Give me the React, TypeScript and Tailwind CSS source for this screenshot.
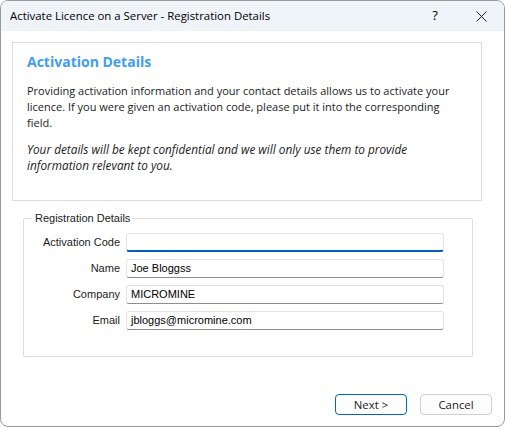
import React from "react";

const ui = { fontFamily: '"Open Sans", "Noto Sans", sans-serif' };
const form = { fontFamily: '"Liberation Sans", Arial, sans-serif' };

interface FieldProps {
  label: string;
  value: string;
  focused?: boolean;
}

function Field({ label, value, focused }: FieldProps) {
  return (
    <div className="flex items-center h-[19px]">
      <label className="w-[102px] pr-[6px] text-right text-[11px] text-[#1b1b1b]">{label}</label>
      <div
        className={`w-[318px] h-[19px] rounded-[3px] border border-[#e3e3e3] bg-white flex items-center px-[4px] text-[11px] text-black ${
          focused ? "border-b-2 border-b-[#005fb8]" : "border-b-[#8d8d8d]"
        }`}
      >
        {value}
      </div>
    </div>
  );
}

export default function App() {
  return (
    <div className="w-[505px] h-[427px] bg-white">
      <div
        className="w-full h-full flex flex-col bg-white border border-[#9a9a9a] rounded-[8px] overflow-hidden"
        style={ui}
      >
        {/* title bar */}
        <div className="h-[30px] shrink-0 bg-[#eff4f9] flex items-center">
          <span className="pl-[9px] text-[11.4px] text-black flex-1">
            Activate Licence on a Server - Registration Details
          </span>
          <div className="w-[46px] h-full flex items-center justify-center text-[13px] text-black">?</div>
          <div className="w-[46px] h-full flex items-center justify-center">
            <svg width="11" height="11" viewBox="0 0 11 11">
              <path d="M0.5 0.5 L10.5 10.5 M10.5 0.5 L0.5 10.5" stroke="#1a1a1a" strokeWidth="1" />
            </svg>
          </div>
        </div>

        <div className="flex-1 flex flex-col px-[11px] pt-[11px]">
          {/* info panel */}
          <div className="w-[470px] h-[159px] border border-[#dcdcdc] pl-[14px] pt-[8px]">
            <h1 className="text-[14px] font-bold text-[#3d9ef2] leading-[22px]">Activation Details</h1>
            <p className="mt-[10px] w-[440px] text-[11px] leading-[16px] text-[#1b1b1b]">
              Providing activation information and your contact details allows us to activate your
              licence. If you were given an activation code, please put it into the corresponding
              field.
            </p>
            <p className="mt-[10px] w-[440px] text-[11.8px] leading-[16px] italic text-[#1b1b1b]">
              Your details will be kept confidential and we will only use them to provide information
              relevant to you.
            </p>
          </div>

          {/* registration group */}
          <fieldset
            className="mt-[10px] ml-[11px] w-[450px] h-[146px] border border-[#dcdcdc] rounded-[2px]"
            style={form}
          >
            <legend className="ml-[8px] px-[3px] text-[11px] leading-[14px] text-[#1b1b1b]">
              Registration Details
            </legend>
            <div className="mt-[8px] flex flex-col gap-[7px]">
              <Field label="Activation Code" value="" focused />
              <Field label="Name" value="Joe Bloggss" />
              <Field label="Company" value="MICROMINE" />
              <Field label="Email" value="jbloggs@micromine.com" />
            </div>
          </fieldset>

          {/* buttons */}
          <div className="mt-auto mb-[11px] flex justify-end gap-[13px] pr-[1px]">
            <button className="w-[72px] h-[21px] rounded-[4px] border border-[#0067c0] bg-[#fdfdfd] text-[11.4px] text-[#1b1b1b]">
              Next &gt;
            </button>
            <button className="w-[72px] h-[21px] rounded-[4px] border border-[#d0d0d0] bg-[#fdfdfd] text-[11.4px] text-[#1b1b1b]">
              Cancel
            </button>
          </div>
        </div>
      </div>
    </div>
  );
}
